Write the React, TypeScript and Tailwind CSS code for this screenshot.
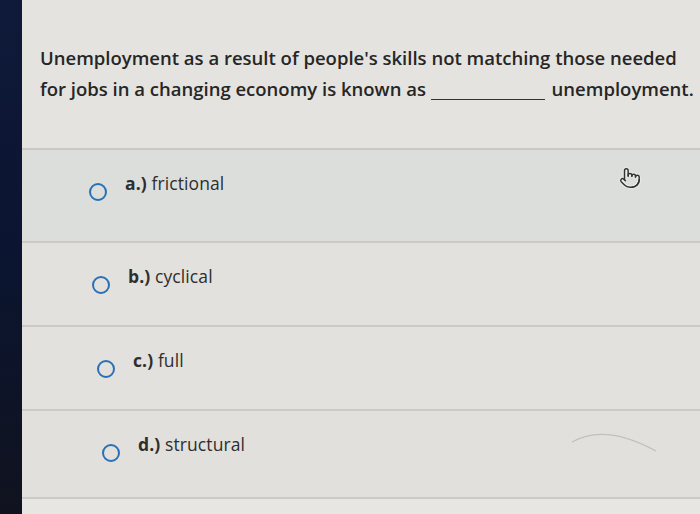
import { Pointer } from 'lucide-react';

const options = [
  { key: 'a.)', text: 'frictional', pl: 'pl-[67px]', bg: 'bg-[#dcdedc]', h: 'h-[93px]', pt: 'pt-[22px]' },
  { key: 'b.)', text: 'cyclical', pl: 'pl-[70px]', bg: 'bg-[#e3e1dd]', h: 'h-[84px]', pt: 'pt-[22px]' },
  { key: 'c.)', text: 'full', pl: 'pl-[75px]', bg: 'bg-[#e2e1dd]', h: 'h-[84px]', pt: 'pt-[22px]' },
  { key: 'd.)', text: 'structural', pl: 'pl-[80px]', bg: 'bg-[#e1e0dc]', h: 'h-[88px]', pt: 'pt-[22px]' },
];

function Radio() {
  return <span className="mt-[11px] block h-[18px] w-[18px] shrink-0 rounded-full border-[2.5px] border-[#2a70b6]" />;
}

export default function App() {
  return (
    <div className="flex h-[514px] w-[700px] overflow-hidden bg-[#e4e2de] font-['Open_Sans',sans-serif] text-[#2b2b2b]">
      <div className="w-[22px] shrink-0 bg-gradient-to-b from-[#0f1a3a] via-[#0b1430] to-[#10131f]" />
      <div className="flex min-w-0 flex-1 flex-col">
        <div className="h-[150px] shrink-0 border-b-2 border-[#c9c8c5] bg-[#e5e3df] pl-[18px] pt-[42px]">
          <p className="text-[18.5px] leading-[31px] font-semibold text-[#262626]">
            Unemployment as a result of people's skills not matching those needed
            <br />
            for jobs in a changing economy is known as{' '}
            <span className="inline-block w-[114px] translate-y-[4px] border-b-[1.5px] border-[#333]" />{' '}
            <span className="pl-[2px]">unemployment.</span>
          </p>
        </div>
        {options.map((o, i) => (
          <div
            key={o.key}
            className={`relative flex shrink-0 items-start gap-[18px] border-b-2 border-[#cbcac7] ${o.bg} ${o.h} ${o.pl} ${o.pt}`}
          >
            <Radio />
            <div className="text-[17.5px] leading-[22px] tracking-[0.1px] text-[#2e2e2e]">
              <span className="font-bold">{o.key}</span> {o.text}
            </div>
            {i === 0 && (
              <Pointer className="absolute left-[597px] top-[17px] h-[22px] w-[22px] text-[#333] drop-shadow-[0_0_1px_#fff]" strokeWidth={1.6} />
            )}
            {i === 3 && (
              <svg className="absolute left-[548px] top-[18px]" width="90" height="26" viewBox="0 0 90 26">
                <path d="M2 13 Q35 -6 86 22" fill="none" stroke="#c2c0bd" strokeWidth="1.3" />
              </svg>
            )}
          </div>
        ))}
        <div className="flex-1 bg-[#e8e6e3]" />
      </div>
    </div>
  );
}
